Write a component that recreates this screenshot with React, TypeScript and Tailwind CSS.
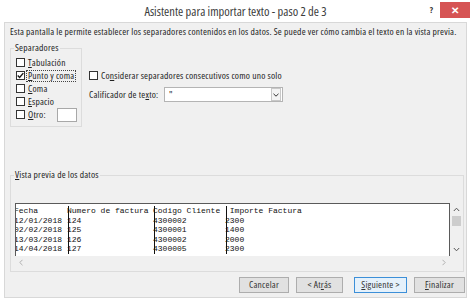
import type { JSX, ReactNode } from 'react'

const ROWS: string[][] = [
  ['Fecha', 'Numero de factura', 'Codigo Cliente', ' Importe Factura'],
  ['12/01/2018', '124', '4300002', '2300'],
  ['02/02/2018', '125', '4300001', '1400'],
  ['13/03/2018', '126', '4300002', '2000'],
  ['14/04/2018', '127', '4300005', '2300'],
]

// column widths in px (monospace, 4.8px per char)
const COL_W = ['w-[54px]', 'w-[86px]', 'w-[72px]', 'flex-1']

function U({ children }: { children: ReactNode }): JSX.Element {
  return <span className="underline underline-offset-[1px] decoration-[0.5px]">{children}</span>
}

function Box({ checked = false }: { checked?: boolean }): JSX.Element {
  return (
    <span className="flex h-[9px] w-[9px] shrink-0 items-center justify-center border border-[#333] bg-white">
      {checked ? (
        <svg width="7" height="7" viewBox="0 0 7 7">
          <path d="M0.7 3.6 L2.6 5.5 L6.3 1.1" stroke="#1a1a1a" strokeWidth="1.4" fill="none" />
        </svg>
      ) : null}
    </span>
  )
}

function Btn({ children, focused = false }: { children: ReactNode; focused?: boolean }): JSX.Element {
  return (
    <div
      className={
        focused
          ? 'flex h-[16px] items-center justify-center whitespace-nowrap border border-[#3c8fd8] bg-[#e5f1fb] text-[9.5px] text-[#333]'
          : 'flex h-[16px] items-center justify-center whitespace-nowrap border border-[#adadad] bg-[#e1e1e1] text-[9.5px] text-[#333]'
      }
    >
      {children}
    </div>
  )
}

export default function App(): JSX.Element {
  return (
    <div className="h-[302px] w-[474px] overflow-hidden bg-white font-['Open_Sans','Noto_Sans',sans-serif] text-[#222] [font-stretch:87.5%]">
      {/* title bar */}
      <div className="flex h-[22px] items-start">
        <div className="flex-1" />
        <div className="ml-[1px] whitespace-nowrap pt-[3px] text-[12.5px] leading-[18px] text-[#3c3c3c]">
          Asistente para importar texto - paso 2 de 3
        </div>
        <div className="flex flex-1 items-start justify-end pr-[4px] pt-[2px]">
          <span className="mr-[7px] mt-[2px] text-[9px] font-bold leading-[12px] text-[#333]">?</span>
          <span className="flex h-[16px] w-[30px] items-center justify-center bg-[#d65454] text-[10px] font-bold leading-none text-white">
            ✕
          </span>
        </div>
      </div>

      {/* dialog body */}
      <div className="ml-[4px] h-[276px] w-[463px] border border-[#d8d8d8] bg-[#f0f0f0] text-[9.5px] leading-[12px] tracking-[0.2px]">
        <p className="ml-[5px] mt-[3px] whitespace-nowrap">
          Esta pantalla le permite establecer los separadores contenidos en los datos. Se puede ver cómo cambia el texto en la vista previa.
        </p>

        <div className="mt-[4px] flex">
          <fieldset className="ml-[5px] h-[85px] w-[72px] shrink-0 border border-[#dcdcdc] pl-[5px]">
            <legend className="ml-[-2px] px-[1px]">Separadores</legend>
            <div className="mt-[2px] flex flex-col whitespace-nowrap">
              <div className="flex h-[13px] items-center gap-[3px]">
                <Box />
                <span><U>T</U>abulación</span>
              </div>
              <div className="flex h-[13px] items-center gap-[1px]">
                <Box checked />
                <span className="border border-dotted border-[#444] px-[1px] leading-[10px]"><U>P</U>unto y coma</span>
              </div>
              <div className="flex h-[13px] items-center gap-[3px]">
                <Box />
                <span><U>C</U>oma</span>
              </div>
              <div className="flex h-[13px] items-center gap-[3px]">
                <Box />
                <span><U>E</U>spacio</span>
              </div>
              <div className="flex h-[13px] items-center gap-[3px]">
                <Box />
                <span className="w-[26px]"><U>O</U>tro:</span>
                <span className="h-[14px] w-[20px] border border-[#a8a8a8] bg-white" />
              </div>
            </div>
          </fieldset>

          <div className="ml-[7px] flex flex-col whitespace-nowrap">
            <div className="mt-[27px] flex h-[13px] items-center gap-[3px]">
              <Box />
              <span>Co<U>n</U>siderar separadores consecutivos como uno solo</span>
            </div>
            <div className="mt-[5px] flex h-[15px] items-center">
              <span className="w-[75px]">Calificador de te<U>x</U>to:</span>
              <div className="flex h-[15px] w-[119px] items-center justify-between border border-[#b4b4b4] bg-white pl-[4px]">
                <span className="leading-none">"</span>
                <span className="mr-[1px] flex h-[13px] w-[10px] items-center justify-center border border-[#c8c8c8] bg-[#f4f4f4]">
                  <svg width="6" height="4" viewBox="0 0 6 4">
                    <path d="M0.5 0.8 L3 3.2 L5.5 0.8" stroke="#333" strokeWidth="1" fill="none" />
                  </svg>
                </span>
              </div>
            </div>
          </div>
        </div>

        {/* preview */}
        <fieldset className="ml-[5px] mt-[42px] h-[103px] w-[454px] border border-[#dcdcdc] pl-[4px]">
          <legend className="ml-[-1px] px-[1px]"><U>V</U>ista previa de los datos</legend>
          <div className="mt-[22px] flex h-[53px]">
            <div className="w-[435px] overflow-hidden border-l border-r border-t border-[#5a5a5a] bg-white pt-[2px] font-['Liberation_Mono',monospace] text-[8px] leading-[9.5px] tracking-normal text-[#111] [font-stretch:normal]">
              {ROWS.map((row, i) => (
                <div key={i} className="flex whitespace-pre">
                  {row.map((cell, j) => (
                    <div
                      key={j}
                      className={
                        j === 0
                          ? `${COL_W[j]} -ml-[2px] shrink-0`
                          : `${COL_W[j]} shrink-0 border-l border-[#111]`
                      }
                    >
                      <span className={j === 0 ? '' : '-ml-[2px]'}>{cell}</span>
                    </div>
                  ))}
                </div>
              ))}
            </div>
            <div className="flex w-[12px] flex-col items-center">
              <svg className="mt-[4px]" width="7" height="5" viewBox="0 0 7 5">
                <path d="M0.8 4 L3.5 1.2 L6.2 4" stroke="#555" strokeWidth="1" fill="none" />
              </svg>
              <div className="mt-[4px] h-[10px] w-[9px] bg-[#cdcdcd]" />
              <div className="flex-1" />
              <svg className="mb-[4px]" width="7" height="5" viewBox="0 0 7 5">
                <path d="M0.8 1 L3.5 3.8 L6.2 1" stroke="#555" strokeWidth="1" fill="none" />
              </svg>
            </div>
          </div>
          <div className="flex h-[12px] w-[435px] items-center justify-between px-[4px]">
            <svg width="4" height="7" viewBox="0 0 4 7">
              <path d="M3.5 0.8 L0.8 3.5 L3.5 6.2" stroke="#b0b0b0" strokeWidth="1" fill="none" />
            </svg>
            <svg width="4" height="7" viewBox="0 0 4 7">
              <path d="M0.5 0.8 L3.2 3.5 L0.5 6.2" stroke="#b0b0b0" strokeWidth="1" fill="none" />
            </svg>
          </div>
        </fieldset>

        {/* buttons */}
        <div className="mt-[5px] flex justify-end pr-[1px]">
          <div className="w-[50px]"><Btn>Cancelar</Btn></div>
          <div className="ml-[7px] w-[47px]"><Btn>&lt; At<U>r</U>ás</Btn></div>
          <div className="ml-[11px] w-[53px]"><Btn focused><U>S</U>iguiente &gt;</Btn></div>
          <div className="ml-[7px] w-[51px]"><Btn><U>F</U>inalizar</Btn></div>
        </div>
      </div>
    </div>
  )
}
